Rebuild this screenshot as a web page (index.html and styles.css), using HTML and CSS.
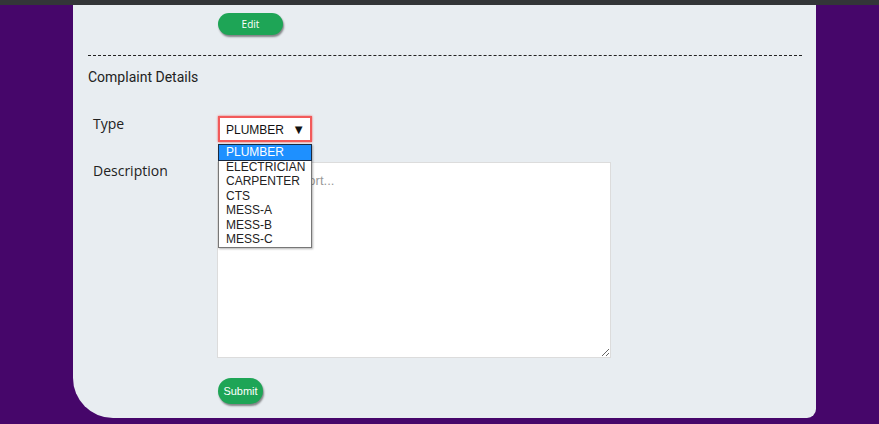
FILE: index.html
```html
<!DOCTYPE html>
<html>
<head>
  <title>Complaint</title>
  <link rel="stylesheet" href="styles.css">
</head>
<body>
  <div class="topbar"></div>
  <div class="card">
    <div class="edit-row">
      <button class="btn edit-btn">Edit</button>
    </div>
    <hr class="divider">
    <h3 class="section-title">Complaint Details</h3>

    <div class="form-row type-row">
      <label class="field-label">Type</label>
      <div class="select-wrap">
        <div class="select-box">
          <span>PLUMBER</span>
          <span class="arrow">&#9660;</span>
        </div>
        <ul class="select-list">
          <li class="active">PLUMBER</li>
          <li>ELECTRICIAN</li>
          <li>CARPENTER</li>
          <li>CTS</li>
          <li>MESS-A</li>
          <li>MESS-B</li>
          <li>MESS-C</li>
        </ul>
      </div>
    </div>

    <div class="form-row desc-row">
      <label class="field-label">Description</label>
      <textarea class="desc" placeholder="Enter your report..."></textarea>
    </div>

    <div class="submit-row">
      <button class="btn submit-btn">Submit</button>
    </div>
  </div>
</body>
</html>
```

FILE: styles.css
```css
body {
  margin: 0;
  background: #46066a;
  font-family: "Open Sans", "Liberation Sans", sans-serif;
}

.topbar {
  height: 5px;
  background: #333538;
}

.card {
  margin: 0 63px 0 73px;
  height: 413px;
  box-sizing: border-box;
  background: #e8edf1;
  border-radius: 0 0 9px 40px;
  padding: 8px 14px 0 15px;
}

.edit-row {
  padding-left: 130px;
}

.btn {
  display: block;
  border: none;
  background: #1ea556;
  color: #fff;
  border-radius: 12px;
  box-shadow: 1px 2px 2px rgba(0, 0, 0, 0.45);
  padding: 0;
  cursor: pointer;
}

.edit-btn {
  width: 65px;
  height: 22px;
  font-family: "Open Sans", sans-serif;
  font-size: 10px;
}

.divider {
  margin: 20px 0 0 0;
  border: none;
  border-top: 1.5px dashed #222;
  height: 0;
}

.section-title {
  margin: 13px 0 0 0;
  font-family: Roboto, sans-serif;
  font-weight: 400;
  font-size: 14px;
  color: #222;
}

.form-row {
  display: grid;
  grid-template-columns: 125px auto;
  padding-left: 5px;
}

.field-label {
  font-size: 14px;
  color: #222;
  line-height: 18px;
}

.type-row {
  margin-top: 31px;
}

.type-row .field-label {
  margin-top: -1px;
}

.select-wrap {
  position: relative;
  width: 94px;
}

.select-box {
  box-sizing: border-box;
  height: 26px;
  width: 94px;
  background: #fff;
  border: 2px solid #f25a5a;
  box-shadow: 0 0 2px #f25a5a;
  display: flex;
  align-items: center;
  justify-content: space-between;
  padding: 1px 5px 0 6px;
  font-family: "Liberation Sans", Arial, sans-serif;
  font-size: 12px;
  color: #111;
}

.arrow {
  font-size: 13px;
}

.select-list {
  position: absolute;
  top: 28px;
  left: 0;
  width: 94px;
  box-sizing: border-box;
  margin: 0;
  padding: 0;
  list-style: none;
  background: #fff;
  border: 1px solid #777;
  box-shadow: 1px 1px 2px rgba(0, 0, 0, 0.3);
  font-family: "Liberation Sans", Arial, sans-serif;
  font-size: 12px;
  color: #222;
  z-index: 2;
}

.select-list li {
  height: 14.5px;
  line-height: 14.5px;
  padding-left: 7px;
}

.select-list li.active {
  background: #1e90ff;
  color: #fff;
  outline: 1px solid #1a2a40;
}

.desc-row {
  margin-top: 20px;
}

.desc {
  width: 394px;
  height: 196px;
  box-sizing: border-box;
  margin-left: -1px;
  border: 1px solid #dcdcdc;
  background: #fff;
  padding: 10px 8px;
  font-family: "Liberation Sans", Arial, sans-serif;
  font-size: 13px;
  resize: vertical;
}

.desc::placeholder {
  color: #999;
}

.submit-row {
  padding-left: 130px;
  margin-top: 20px;
}

.submit-btn {
  width: 45px;
  height: 26px;
  border-radius: 13px;
  font-family: "Liberation Sans", Arial, sans-serif;
  font-size: 11px;
}
```
